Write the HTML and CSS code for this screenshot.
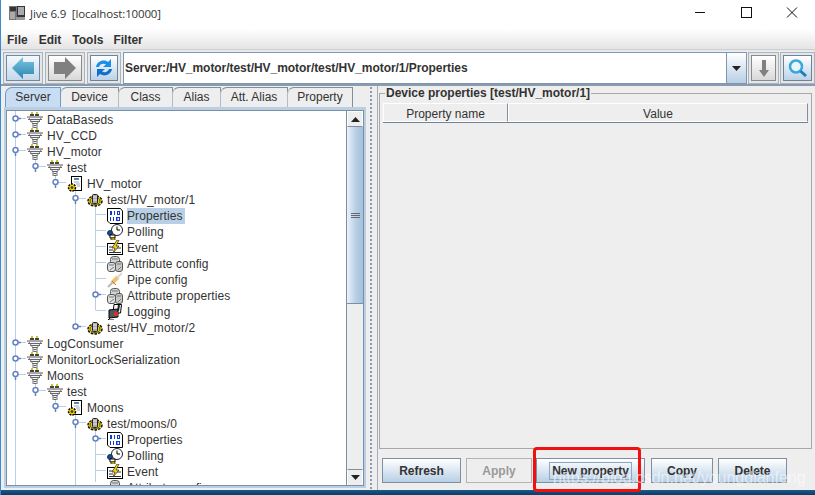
FILE: index.html
```html
<!DOCTYPE html>
<html lang="en">
<head>
<meta charset="utf-8">
<title>Jive 6.9</title>
<link rel="stylesheet" href="styles.css">
</head>
<body>
<svg class="defs" width="0" height="0">
  <symbol id="srv" viewBox="0 0 16 16">
    <rect x="4" y="0" width="2" height="2" fill="#c8c820"/><rect x="9" y="0" width="2" height="2" fill="#c8c820"/>
    <rect x="3" y="2" width="4" height="2" fill="#444"/><rect x="8" y="2" width="4" height="2" fill="#444"/>
    <rect x="0" y="4" width="16" height="2" fill="#a8a8a8"/>
    <polygon points="2,6 14,6 10,12 10,16 6,16 6,12" fill="#f4f4f4"/>
    <path d="M1 7.500H15M3 9.500H13M5 11.500H11M6.500 13.500H9.500M6.500 15.500H9.500" stroke="#666"/>
    <path d="M2 6L6 12V16M14 6L10 12V16" fill="none" stroke="#777"/>
  </symbol>
  <symbol id="dev" viewBox="0 0 16 16">
    <rect x="4.500" y=".5" width="10" height="14" fill="#fff" stroke="#000"/>
    <rect x="7" y="2" width="5" height="2" fill="#58a"/>
    <path d="M7 6h5M9 8h4M10 10h3" stroke="#9ab"/>
    <circle cx="5" cy="11.500" r="3.500" fill="#ffd800" stroke="#000" stroke-width="1.500" stroke-dasharray="2 1"/>
    <circle cx="5" cy="11.500" r="1.500" fill="#444"/>
  </symbol>
  <symbol id="gear" viewBox="0 0 16 16">
    <ellipse cx="8" cy="9" rx="7" ry="5" fill="#e8cc10" stroke="#111" stroke-width="1.500" stroke-dasharray="2.500 1.200"/>
    <ellipse cx="8" cy="9" rx="5" ry="3.500" fill="#e8cc10" stroke="#554"/>
    <rect x="5.500" y="2.500" width="5" height="9" rx="1" fill="#aaa" stroke="#222"/>
    <path d="M6 5h4M6 8h4" stroke="#eee"/>
  </symbol>
  <symbol id="prop" viewBox="0 0 16 16">
    <path d="M.5.500H13.500L15.500 3V15.500H3L.5 13Z" fill="#fff" stroke="#000"/>
    <path d="M3 3h2v4H3zM7 3h1v4H7zM10 3h3v4h-3zM3 9h1v4H3zM6 9h1v4H6zM9 9h4v4H9z" fill="#0a3bd8"/>
    <path d="M11 4h1v2h-1zM10.500 10h1.500v2h-1.500z" fill="#fff"/>
  </symbol>
  <symbol id="poll" viewBox="0 0 16 16">
    <circle cx="10" cy="6" r="5.500" fill="#fff" stroke="#222"/>
    <path d="M10 2.500V6h3" fill="none" stroke="#000"/>
    <circle cx="3" cy="9" r="2.500" fill="#1c3fb0" stroke="#143"/>
    <path d="M3 11h5v3H3z" fill="#fff" stroke="#000"/>
    <path d="M4 14h4v2H4z" fill="#ffd800" stroke="#000" stroke-width=".6"/>
  </symbol>
  <symbol id="evt" viewBox="0 0 16 16">
    <rect x=".5" y="3.500" width="15" height="11" fill="#fff" stroke="#000"/>
    <path d="M2 7h5M2 10h4M2 12.500h12M10 8h4" stroke="#333"/>
    <polygon points="10,0 5,8 8,8 6,13 12,6 9,6 12,0" fill="#ffd800" stroke="#222" stroke-width=".7"/>
  </symbol>
  <symbol id="attr" viewBox="0 0 16 16">
    <rect x="3.500" y=".5" width="9" height="8" rx="3" fill="#d4d4d4" stroke="#555"/>
    <rect x=".5" y="6.500" width="8" height="9" rx="2.500" fill="#e0e0e0" stroke="#555"/>
    <rect x="8.500" y="5.500" width="7" height="10" rx="2.500" fill="#c8c8c8" stroke="#555"/>
    <path d="M5 3h6M2 9h5M10 8h4M3 14l4-3M11 14l3-3" stroke="#777"/>
  </symbol>
  <symbol id="pipe" viewBox="0 0 16 16">
    <path d="M1 15L6 10" stroke="#b8b8b8" stroke-width="2"/>
    <path d="M5 11L11 5" stroke="#f0c070" stroke-width="4"/>
    <path d="M10 6L15 1" stroke="#d8d8d8" stroke-width="2"/>
    <path d="M5 9L9 13" stroke="#a08050"/>
  </symbol>
  <symbol id="logg" viewBox="0 0 16 16">
    <polygon points="7,.5 14.500,.5 13.500,9 6,9" fill="#fff" stroke="#000"/>
    <polygon points="2,6 11,5 11,13 2,14" fill="#555" stroke="#000"/>
    <rect x="7" y="8" width="4" height="4" fill="#c33"/>
    <path d="M3 14l-2 2h6" fill="none" stroke="#000"/>
    <path d="M12 1l-1 6" stroke="#222" stroke-width="2"/>
  </symbol>
  <symbol id="hc" viewBox="0 0 9 7"><circle cx="3.500" cy="3.500" r="2.500" fill="#fff" stroke="#6382bf" stroke-width="1.500"/><path d="M6 3.500H9" stroke="#6382bf" stroke-width="1.500"/></symbol>
  <symbol id="he" viewBox="0 0 7 9"><circle cx="3.500" cy="3" r="2.500" fill="#fff" stroke="#6382bf" stroke-width="1.500"/><path d="M3.500 5.500V9" stroke="#6382bf" stroke-width="1.500"/></symbol>
</svg>

<div class="window">
  <header class="titlebar">
    <svg class="appicon" viewBox="0 0 16 16"><rect y="1" width="16" height="14" fill="#777"/><rect x="1" y="2" width="6" height="4" fill="#333"/><rect x="8" y="1" width="8" height="11" fill="#333"/><rect x="9" y="2" width="6" height="8" fill="#aaa"/><rect x="1" y="7" width="5" height="7" fill="#aaa"/><rect x="7" y="12" width="9" height="3" fill="#999"/></svg>
    <span class="title">Jive 6.9&nbsp; [localhost:10000]</span>
    <div class="winbtns">
      <svg class="winbtn" viewBox="0 0 46 30"><path d="M18 13.500H28" stroke="#111"/></svg>
      <svg class="winbtn" viewBox="0 0 46 30"><rect x="18.500" y="8.500" width="10" height="10" fill="none" stroke="#111"/></svg>
      <svg class="winbtn" viewBox="0 0 46 30"><path d="M18 8.500L28 18.500M28 8.500L18 18.500" stroke="#111"/></svg>
    </div>
  </header>
  <nav class="menubar"><span>File</span><span>Edit</span><span>Tools</span><span>Filter</span></nav>
  <div class="toolbar">
    <div class="tool t-back"><div class="face grey">
      <svg viewBox="0 0 22 22" class="ti"><defs><linearGradient id="ba" x1="0" y1="0" x2="0" y2="1"><stop offset="0" stop-color="#7cc4e2"/><stop offset="1" stop-color="#2a86ae"/></linearGradient></defs><polygon points="0,11 11,0 11,5 22,5 22,17 11,17 11,22" fill="url(#ba)"/></svg>
    </div></div>
    <div class="tool t-fwd"><div class="face grey">
      <svg viewBox="0 0 22 22" class="ti"><polygon points="22,11 11,0 11,5 0,5 0,17 11,17 11,22" fill="#808080"/></svg>
    </div></div>
    <div class="tool t-ref"><div class="face blue">
      <svg viewBox="0 0 20 20" class="ti ti-r"><path d="M2 9C3 3 10 1 14 4L17 1V9H9L12 6.500C9 5 6 6 5 9Z" fill="#1c8ee8"/><path d="M18 11C17 17 10 19 6 16L3 19V11H11L8 13.500C11 15 14 14 15 11Z" fill="#1070d0"/></svg>
    </div></div>
    <div class="combo">
      <div class="path">Server:/HV_motor/test/HV_motor/test/HV_motor/1/Properties</div>
      <div class="drop"><svg width="9" height="5" viewBox="0 0 9 5"><polygon points="0,0 9,0 4.500,5" fill="#222"/></svg></div>
    </div>
    <div class="tool t-down"><div class="face grey">
      <svg viewBox="0 0 10 17" class="ti ti-d"><path d="M3 0H7V10H10L5 17 0 10H3Z" fill="#808080"/></svg>
    </div></div>
    <div class="tool t-find"><div class="face blue">
      <svg viewBox="0 0 20 18" class="ti ti-f"><circle cx="8" cy="7.500" r="6" fill="#eaf6fc" stroke="#38a8dc" stroke-width="2.500"/><path d="M12.500 12L18 17" stroke="#1f7fb8" stroke-width="3"/></svg>
    </div></div>
  </div>

  <main class="main">
    <section class="left">
      <div class="tabs">
        <span class="tab on t1">Server</span><span class="tab t2">Device</span><span class="tab t3">Class</span><span class="tab t4">Alias</span><span class="tab t5">Att. Alias</span><span class="tab t6">Property</span>
      </div>
      <div class="pane">
        <div class="treebox">
          <div class="tree">
            <svg class="lines" width="110" height="384" viewBox="0 0 110 384">
              <g stroke="#b8cfe5" fill="none">
                <path d="M7.500 0V384M27.500 48V56M47.500 64V72M67.500 80V216M87.500 96V200M27.500 272V280M47.500 288V296M67.500 304V384M87.500 320V372"/>
                <path d="M7.500 8.500H18M7.500 24.500H18M7.500 40.500H18M7.500 232.500H18M7.500 248.500H18M7.500 264.500H18M27.500 56.500H38M27.500 280.500H38M47.500 72.500H58M47.500 296.500H58M67.500 88.500H78M67.500 216.500H78M67.500 312.500H78M87.500 104.500H98M87.500 120.500H98M87.500 136.500H98M87.500 152.500H98M87.500 168.500H98M87.500 184.500H98M87.500 200.500H98M87.500 328.500H98M87.500 344.500H98M87.500 360.500H98"/>
              </g>
              <use href="#hc" x="4" y="5" width="9" height="7"/>
              <use href="#hc" x="4" y="21" width="9" height="7"/>
              <use href="#he" x="4" y="37" width="7" height="9"/>
              <use href="#he" x="24" y="53" width="7" height="9"/>
              <use href="#he" x="44" y="69" width="7" height="9"/>
              <use href="#he" x="64" y="85" width="7" height="9"/>
              <use href="#hc" x="84" y="181" width="9" height="7"/>
              <use href="#hc" x="64" y="213" width="9" height="7"/>
              <use href="#hc" x="4" y="229" width="9" height="7"/>
              <use href="#hc" x="4" y="245" width="9" height="7"/>
              <use href="#he" x="4" y="261" width="7" height="9"/>
              <use href="#he" x="24" y="277" width="7" height="9"/>
              <use href="#he" x="44" y="293" width="7" height="9"/>
              <use href="#he" x="64" y="309" width="7" height="9"/>
              <use href="#hc" x="84" y="325" width="9" height="7"/>
            </svg>
            <div class="row l0"><svg class="ic"><use href="#srv"/></svg><span>DataBaseds</span></div>
            <div class="row l0"><svg class="ic"><use href="#srv"/></svg><span>HV_CCD</span></div>
            <div class="row l0"><svg class="ic"><use href="#srv"/></svg><span>HV_motor</span></div>
            <div class="row l1"><svg class="ic"><use href="#srv"/></svg><span>test</span></div>
            <div class="row l2"><svg class="ic"><use href="#dev"/></svg><span>HV_motor</span></div>
            <div class="row l3"><svg class="ic"><use href="#gear"/></svg><span>test/HV_motor/1</span></div>
            <div class="row l4"><svg class="ic"><use href="#prop"/></svg><span class="sel">Properties</span></div>
            <div class="row l4"><svg class="ic"><use href="#poll"/></svg><span>Polling</span></div>
            <div class="row l4"><svg class="ic"><use href="#evt"/></svg><span>Event</span></div>
            <div class="row l4"><svg class="ic"><use href="#attr"/></svg><span>Attribute config</span></div>
            <div class="row l4"><svg class="ic"><use href="#pipe"/></svg><span>Pipe config</span></div>
            <div class="row l4"><svg class="ic"><use href="#attr"/></svg><span>Attribute properties</span></div>
            <div class="row l4"><svg class="ic"><use href="#logg"/></svg><span>Logging</span></div>
            <div class="row l3"><svg class="ic"><use href="#gear"/></svg><span>test/HV_motor/2</span></div>
            <div class="row l0"><svg class="ic"><use href="#srv"/></svg><span>LogConsumer</span></div>
            <div class="row l0"><svg class="ic"><use href="#srv"/></svg><span>MonitorLockSerialization</span></div>
            <div class="row l0"><svg class="ic"><use href="#srv"/></svg><span>Moons</span></div>
            <div class="row l1"><svg class="ic"><use href="#srv"/></svg><span>test</span></div>
            <div class="row l2"><svg class="ic"><use href="#dev"/></svg><span>Moons</span></div>
            <div class="row l3"><svg class="ic"><use href="#gear"/></svg><span>test/moons/0</span></div>
            <div class="row l4"><svg class="ic"><use href="#prop"/></svg><span>Properties</span></div>
            <div class="row l4"><svg class="ic"><use href="#poll"/></svg><span>Polling</span></div>
            <div class="row l4"><svg class="ic"><use href="#evt"/></svg><span>Event</span></div>
            <div class="row l4"><svg class="ic"><use href="#attr"/></svg><span>Attribute config</span></div>
          </div>
          <div class="sbar">
            <div class="sbtn"><svg width="9" height="5" viewBox="0 0 9 5"><polygon points="0,5 9,5 4.500,0" fill="#222"/></svg></div>
            <div class="thumb"><i></i></div>
            <div class="strack"></div>
            <div class="sbtn"><svg width="9" height="5" viewBox="0 0 9 5"><polygon points="0,0 9,0 4.500,5" fill="#222"/></svg></div>
          </div>
        </div>
      </div>
    </section>
    <div class="split"></div>
    <section class="right">
      <fieldset class="group">
        <legend>Device properties [test/HV_motor/1]</legend>
        <div class="thead"><div class="th c1">Property name</div><div class="th c2">Value</div></div>
      </fieldset>
      <div class="actions">
        <button class="btn b1">Refresh</button>
        <button class="btn b2" disabled>Apply</button>
        <button class="btn b3"><span class="focus">New property</span></button>
        <button class="btn b4">Copy</button>
        <button class="btn b5">Delete</button>
      </div>
    </section>
  </main>
  <div class="taskbar"></div>
  <div class="redbox"></div>
  <div class="mark">https://blog.csdn.net/youngdianfeng</div>
</div>
</body>
</html>
```
FILE: styles.css
```css
* { box-sizing: border-box; }
html, body { margin: 0; padding: 0; width: 815px; height: 495px; overflow: hidden; }
body { font: 12px "Liberation Sans", Arial, sans-serif; color: #333; background: #eee; }
.defs { position: absolute; }
.window { position: relative; width: 815px; height: 495px; display: flex; flex-direction: column; border-left: 1px solid #3a8ad0; }

.titlebar { height: 29px; background: #fff; display: flex; align-items: center; padding-left: 8px; flex: none; }
.appicon { width: 16px; height: 16px; margin-bottom: 3px; }
.title { font: 11.500px "Open Sans", "Noto Sans", sans-serif; letter-spacing: -.15px; color: #333; margin-left: 5px; margin-bottom: 3px; white-space: nowrap; }
.winbtns { margin-left: auto; display: flex; margin-top: -1px; }
.winbtn { width: 46px; height: 30px; display: block; }

.menubar { height: 21px; flex: none; background: linear-gradient(#fff, #e4e4e4); border-bottom: 1px solid #d0d0d0; display: flex; gap: 11px; padding: 4px 0 0 6px; font-weight: bold; color: #333; }
.menubar span:nth-child(3) { margin-right: -1px; }

.toolbar { height: 36px; flex: none; display: flex; align-items: stretch; padding: 1px 0 0 2px; gap: 2px; background: #eee; border-bottom: 2px solid #8a9bb0; border-top: 1px solid #dfe6ee; }
.tool { border: 1px solid #a8b4c0; padding: 2px; background: #e6e6e6; display: flex; flex: none; }
.t-back { width: 40px; } .t-fwd { width: 40px; } .t-ref { width: 34px; }
.t-down { width: 31px; margin-left: -1px; } .t-find { width: 35px; margin-left: -1px; }
.face { flex: 1; display: flex; align-items: center; justify-content: center; border: 1px solid #6f8296; }
.face.grey { background: linear-gradient(#fff, #d8d8d8); border-color: #8a8a8a; }
.t-back .face.grey { background: linear-gradient(#f4f8fc, #c4d8ea); border-color: #6f8aa6; }
.face.blue { background: linear-gradient(#fff, #bcd2e8); }
.ti { width: 22px; height: 22px; display: block; }
.ti-r { width: 20px; height: 20px; }
.ti-d { width: 10px; height: 17px; }
.ti-f { width: 20px; height: 18px; }
.combo { flex: 1; display: flex; min-width: 0; border: 1px solid #7f97b0; }
.path { flex: 1; background: #fff; font-weight: bold; letter-spacing: -.05px; color: #333; display: flex; align-items: center; padding-left: 1px; white-space: nowrap; overflow: hidden; }
.drop { width: 20px; background: linear-gradient(#fff, #b8cfe5); border-left: 1px solid #7f97b0; display: flex; align-items: center; justify-content: center; }

.main { flex: 1; display: flex; min-height: 0; background: #eee; padding-left: 3px; }
.left { width: 362px; flex: none; display: flex; flex-direction: column; padding-top: 1px; }
.tabs { display: flex; height: 20px; flex: none; padding-left: 1px; }
.tab { border: 1px solid #7e8fa0; border-bottom: 0; border-left-color: #b0bcc8; border-top-left-radius: 7px; display: flex; align-items: center; justify-content: center; color: #333; background: #eee; margin-right: -1px; padding-bottom: 1px; }
.tab.on { background: #c8ddf2; border-color: #6f9ac8; position: relative; }
.t1 { width: 56px; } .t2 { width: 59px; } .t3 { width: 55px; } .t4 { width: 49px; } .t5 { width: 68px; } .t6 { width: 66px; }
.pane { flex: 1; min-height: 0; border: 2px solid #b8cfe5; border-top-width: 3px; padding: 0; margin-bottom: 2px; background: #b8cfe5; }
.treebox { display: flex; height: 100%; border: 1px solid #7e8fa0; background: #fff; overflow: hidden; }
.tree { position: relative; flex: 1; padding-top: 1px; overflow: hidden; min-width: 0; }
.lines { position: absolute; left: 1px; top: -1px; }
.row { height: 16px; display: flex; align-items: center; white-space: nowrap; color: #333; position: relative; letter-spacing: .1px; }
.ic { width: 16px; height: 16px; flex: none; margin-right: 4px; }
.row span { padding: 0; line-height: 16px; }
.row .sel { background: #b8cfe5; padding: 0 2px 0 0; }
.l0 { padding-left: 20px; } .l1 { padding-left: 40px; } .l2 { padding-left: 60px; } .l3 { padding-left: 80px; } .l4 { padding-left: 100px; }

.sbar { width: 17px; flex: none; display: flex; flex-direction: column; background: #eee; border-left: 1px solid #7e8fa0; }
.sbtn { height: 16px; flex: none; display: flex; align-items: center; justify-content: center; background: #eee; border: 1px solid #fff; border-bottom: 1px solid #7e8fa0; }
.sbtn:last-child { border-top: 1px solid #7e8fa0; border-bottom: 0; }
.thumb { height: 177px; flex: none; background: linear-gradient(90deg, #eaf2fa, #b8cfe5 55%, #a3c0dc); border-bottom: 1px solid #7e8fa0; display: flex; align-items: center; justify-content: center; }
.thumb i { width: 9px; height: 5px; border-top: 1px solid #667; border-bottom: 1px solid #667; background: linear-gradient(#667, #667) center/100% 1px no-repeat; }
.strack { flex: 1; background: #eee; }

.split { width: 12px; flex: none; background: radial-gradient(circle, #8a9bb0 .8px, transparent 1px) 3px 0/4px 4px repeat-y; border-right: 1px solid #aab; }

.right { flex: 1; min-width: 0; display: flex; flex-direction: column; padding-right: 3px; }
.group { flex: 1; min-height: 0; margin: 0 0 0 1px; padding: 3px 3px 0 3px; border: 1px solid #a8a8a8; min-inline-size: 0; }
.group legend { font-weight: bold; color: #333; padding: 0 1px; margin-left: 2px; line-height: 14px; }
.thead { display: flex; height: 20px; border-bottom: 1px solid #6f8296; }
.th { display: flex; align-items: center; justify-content: center; padding-top: 2px; border: 1px solid #fff; border-right: 1px solid #7e8fa0; border-left: 1px solid #fff; }
.c1 { width: 125px; } .c2 { flex: 1; }

.actions { height: 41px; flex: none; display: flex; align-items: flex-start; padding: 9px 0 0 4px; }
.btn { height: 25px; font: bold 12px "Liberation Sans", Arial, sans-serif; color: #333; background: linear-gradient(#fff, #b8cfe5); border: 1px solid #7e8fa0; padding: 0; }
.btn:disabled { background: #eee; border-color: #b4b4b4; color: #999; }
.b1 { width: 79px; margin-right: 5px; } .b2 { width: 66px; margin-right: 4px; } .b3 { width: 109px; margin-right: 6px; } .b4 { width: 62px; margin-right: 5px; } .b5 { width: 69px; }
.focus { display: inline-block; border: 1px solid #8fa8c0; padding: 1px 2px; }

.taskbar { height: 5px; flex: none; background: linear-gradient(#1a5a8a, #0c3c66); }
.redbox { position: absolute; left: 532px; top: 447px; width: 108px; height: 45px; border: 3px solid #f01010; border-radius: 4px; }
.mark { position: absolute; left: 552px; top: 469px; font: 16px "Liberation Sans", Arial, sans-serif; color: rgba(255,255,255,.55); white-space: nowrap; }
```
